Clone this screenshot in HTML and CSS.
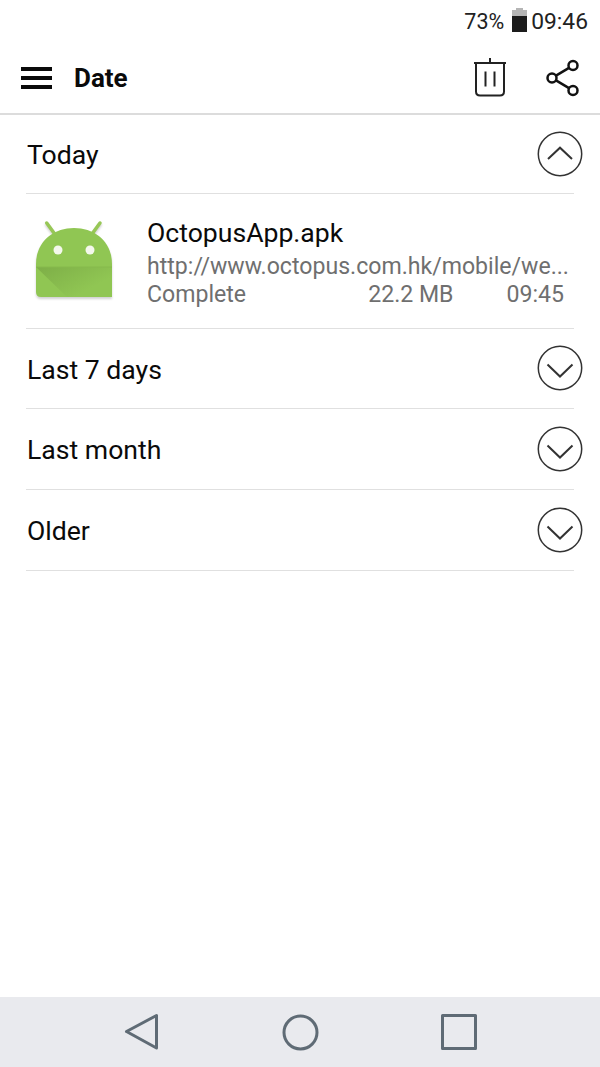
FILE: index.html
```html
<!DOCTYPE html>
<html lang="en">

<head>
    <meta charset="UTF-8" />
    <title>Downloads</title>
    <link rel="stylesheet" href="styles.css">
</head>

<body>
    <div class="phone">
        <div class="status-bar">
            <span class="battery-level">73%</span>
            <svg class="battery" width="15" height="24" viewBox="0 0 15 24">
                <rect x="4" y="0" width="7" height="3" fill="#b5b5b5" />
                <rect x="0" y="2" width="15" height="7" fill="#b5b5b5" />
                <rect x="0" y="8" width="15" height="16" fill="#1c1c1c" />
            </svg>
            <span class="clock">09:46</span>
        </div>

        <header class="toolbar">
            <div class="menu-icon"><span></span><span></span><span></span></div>
            <h1>Date</h1>
            <svg class="trash-icon" width="34" height="40" viewBox="0 0 34 40" fill="none" stroke="#222" stroke-width="2">
                <path d="M1 5H33M17 0V5" />
                <path d="M3 5V33.500Q3 37.500 7 37.500H27Q31 37.500 31 33.500V5" />
                <path d="M12.500 13.500V28.500M21.500 13.500V28.500" />
            </svg>
            <svg class="share-icon" width="36" height="38" viewBox="0 0 36 38" fill="none" stroke="#111" stroke-width="2.500">
                <circle cx="8" cy="19" r="4.500" />
                <circle cx="29" cy="6.500" r="4.500" />
                <circle cx="29" cy="31.500" r="4.500" />
                <path d="M12 16.600L25 8.900M12 21.400L25 29.100" />
            </svg>
        </header>

        <main class="list">
            <div class="group-row">
                <span>Today</span>
                <svg class="chevron-btn" width="46" height="46" viewBox="0 0 46 46" fill="none" stroke="#333" stroke-width="1.500">
                    <circle cx="23" cy="23" r="21.700" />
                    <path d="M11 28L23 16.700L35 28" stroke-width="2" />
                </svg>
            </div>

            <div class="file-row">
                <svg class="apk-icon" width="80" height="82" viewBox="0 0 80 82">
                    <defs>
                        <linearGradient id="foldShade" x1="0" y1="0" x2="0.8" y2="0.6">
                            <stop offset="0" stop-color="#7dae47" />
                            <stop offset="1" stop-color="#90c653" />
                        </linearGradient>
                    </defs>
                    <path d="M12.700 3L20 13M66 3L58.700 13" stroke="#97c756" stroke-width="3.500" stroke-linecap="round" />
                    <path d="M2 44C2 22 19 8 40 8C61 8 78 22 78 44V72Q78 77 73 77H7Q2 77 2 72Z" fill="#90c653" />
                    <path d="M2 47H78V77H33Z" fill="url(#foldShade)" />
                    <path d="M2 46.500H78V47.500H2Z" fill="#86b94d" />
                    <circle cx="24" cy="30" r="4.500" fill="#f4f8ec" />
                    <circle cx="56" cy="30" r="4.500" fill="#f4f8ec" />
                </svg>
                <div class="file-info">
                    <div class="file-name">OctopusApp.apk</div>
                    <div class="file-url">http://www.octopus.com.hk/mobile/we...</div>
                    <div class="file-meta">
                        <span class="file-status">Complete</span>
                        <span class="file-size">22.2 MB</span>
                        <span class="file-time">09:45</span>
                    </div>
                </div>
            </div>

            <div class="group-row">
                <span>Last 7 days</span>
                <svg class="chevron-btn" width="46" height="46" viewBox="0 0 46 46" fill="none" stroke="#333" stroke-width="1.500">
                    <circle cx="23" cy="23" r="21.700" />
                    <path d="M10.500 19.500L23 31.500L35.500 19.500" stroke-width="2" />
                </svg>
            </div>
            <div class="group-row">
                <span>Last month</span>
                <svg class="chevron-btn" width="46" height="46" viewBox="0 0 46 46" fill="none" stroke="#333" stroke-width="1.500">
                    <circle cx="23" cy="23" r="21.700" />
                    <path d="M10.500 19.500L23 31.500L35.500 19.500" stroke-width="2" />
                </svg>
            </div>
            <div class="group-row">
                <span>Older</span>
                <svg class="chevron-btn" width="46" height="46" viewBox="0 0 46 46" fill="none" stroke="#333" stroke-width="1.500">
                    <circle cx="23" cy="23" r="21.700" />
                    <path d="M10.500 19.500L23 31.500L35.500 19.500" stroke-width="2" />
                </svg>
            </div>
        </main>

        <nav class="nav-bar">
            <svg width="36" height="38" viewBox="0 0 36 38" fill="none" stroke="#5f6b75" stroke-width="3" stroke-linejoin="round">
                <path d="M32.500 2.500V35L2.500 18.500Z" />
            </svg>
            <svg width="37" height="37" viewBox="0 0 37 37" fill="none" stroke="#5f6b75" stroke-width="3">
                <circle cx="18.500" cy="18.500" r="16.500" />
            </svg>
            <svg width="36" height="36" viewBox="0 0 36 36" fill="none" stroke="#5f6b75" stroke-width="3" stroke-linejoin="round">
                <rect x="1.500" y="1.500" width="33" height="33" />
            </svg>
        </nav>
    </div>
</body>

</html>
```

FILE: styles.css
```css
* {
    box-sizing: border-box;
}

body {
    margin: 0;
    background-color: #fff;
    font-family: Roboto, "Liberation Sans", sans-serif;
    color: #0a0a0a;
}

.phone {
    display: flex;
    flex-direction: column;
    width: 600px;
    height: 1067px;
    overflow: hidden;
}

.status-bar {
    display: flex;
    align-items: center;
    justify-content: flex-end;
    height: 44px;
    padding: 0 12px 4px 0;
    color: #222;
}

.battery-level {
    margin: 2px 8px 0 0;
    font-size: 21.5px;
}

.clock {
    margin: 2px 0 0 4px;
    font-size: 22.8px;
}

.toolbar {
    display: flex;
    align-items: center;
    height: 71px;
    padding: 0 20px 2px 21px;
    border-bottom: 2px solid #dcdcdc;
}

.menu-icon {
    display: flex;
    flex-direction: column;
    gap: 5px;
    width: 31px;
}

.menu-icon span {
    height: 4px;
    background-color: #0a0a0a;
}

.toolbar h1 {
    flex: 1;
    margin: 0 0 0 22px;
    font-size: 26px;
    font-weight: 700;
}

.trash-icon {
    margin-right: 37px;
}

.list {
    flex: 1;
    padding: 0 26px;
}

.group-row {
    display: flex;
    align-items: center;
    justify-content: space-between;
    height: 81px;
    border-bottom: 1px solid #e0e0e0;
    font-size: 26.6px;
}

.group-row:first-child {
    height: 79px;
}

.file-row + .group-row {
    height: 80px;
}

.group-row span {
    margin: 1px 0 0 1px;
}

.chevron-btn {
    margin: 0 -9px 1px 0;
}

.file-row {
    display: flex;
    align-items: center;
    height: 135px;
    border-bottom: 1px solid #e0e0e0;
}

.apk-icon {
    flex: none;
    margin-left: 8px;
    filter: drop-shadow(0 2px 1px rgba(0, 0, 0, 0.18));
}

.file-info {
    flex: 1;
    min-width: 0;
    margin-left: 33px;
    padding: 4px 10px 0 0;
}

.file-name {
    margin-bottom: 4px;
    font-size: 26.6px;
    line-height: 32px;
}

.file-url,
.file-meta {
    font-size: 23.1px;
    line-height: 28px;
    color: #6f6f6f;
    white-space: nowrap;
}

.file-meta {
    display: flex;
}

.file-status {
    flex: 1;
}

.file-size {
    margin-right: 53px;
}

.nav-bar {
    display: flex;
    align-items: center;
    justify-content: space-between;
    height: 70px;
    padding: 0 123px 0 124px;
    background-color: #e9eaee;
}
```
